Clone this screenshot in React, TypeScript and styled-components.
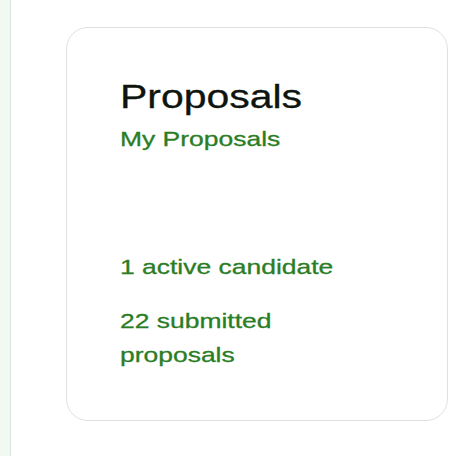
import React from "react";
import styled, { createGlobalStyle } from "styled-components";

const GlobalStyle = createGlobalStyle`
  html, body {
    margin: 0;
    padding: 0;
    background: #ffffff;
    font-family: "Liberation Sans", Arial, sans-serif;
  }
`;

const Page = styled.div`
  display: flex;
  min-height: 456px;
  background: #ffffff;
`;

const SideRail = styled.div`
  width: 10px;
  flex: none;
  background: #f2f8f2;
  border-right: 1px solid #dce6dc;
`;

const Main = styled.main`
  flex: 1;
  padding: 27px 0 0 55px;
`;

const Card = styled.section`
  box-sizing: border-box;
  width: 382px;
  height: 394px;
  border: 1px solid #dfe1df;
  border-radius: 22px;
  background: #ffffff;
  padding: 49px 0 0 53px;
`;

const Content = styled.div`
  width: 200px;
  transform: scaleX(1.26);
  transform-origin: left top;
  display: flex;
  flex-direction: column;
`;

const Title = styled.h2`
  margin: 0;
  font-size: 32.5px;
  line-height: 40px;
  font-weight: 400;
  color: #0e140e;
  white-space: nowrap;
  -webkit-text-stroke: 0.3px #0e140e;
`;

const Subtitle = styled.div`
  margin-top: 10px;
  font-size: 21px;
  line-height: 24px;
  color: #2a7d24;
  white-space: nowrap;
  -webkit-text-stroke: 0.3px #2a7d24;
`;

const Stats = styled.div`
  margin-top: 99px;
  display: flex;
  flex-direction: column;
  gap: 20px;
`;

const Stat = styled.div`
  font-size: 21px;
  line-height: 34px;
  color: #2a7d24;
  -webkit-text-stroke: 0.3px #2a7d24;
`;

export default function App() {
  return (
    <>
      <GlobalStyle />
      <Page>
        <SideRail />
        <Main>
          <Card>
            <Content>
              <Title>Proposals</Title>
              <Subtitle>My Proposals</Subtitle>
              <Stats>
                <Stat>1 active candidate</Stat>
                <Stat>22 submitted proposals</Stat>
              </Stats>
            </Content>
          </Card>
        </Main>
      </Page>
    </>
  );
}
